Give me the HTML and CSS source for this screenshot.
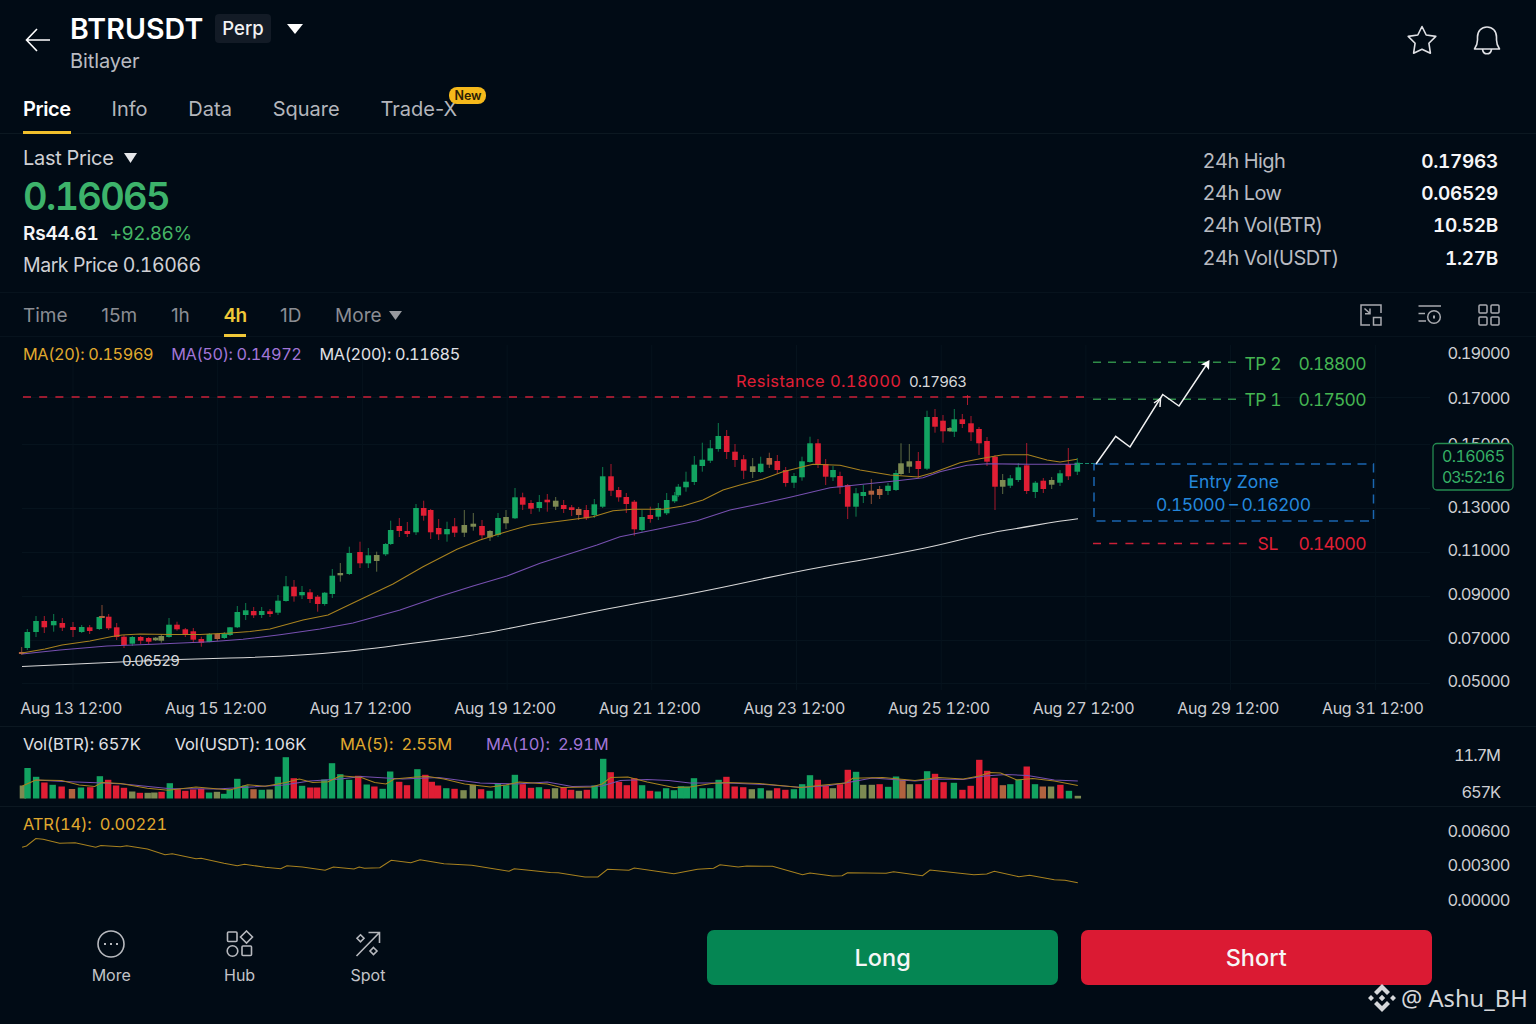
FILE: index.html
```html
<!DOCTYPE html>
<html lang="en">
<head>
  <meta charset="utf-8">
  <title>BTRUSDT Perp</title>
  <link rel="stylesheet" href="styles.css">
</head>
<body>
  <header class="topbar">
    <svg class="back" width="26" height="24" viewBox="0 0 26 24"><path d="M12 1 L1.5 12 L12 23 M1.5 12 H25"/></svg>
    <div class="pair">
      <div class="pair-row">
        <h1>BTRUSDT</h1>
        <span class="perp">Perp</span>
        <svg width="16" height="10" viewBox="0 0 16 10"><path d="M0 0 H16 L8 10 Z" fill="#fff"/></svg>
      </div>
      <div class="pair-name">Bitlayer</div>
    </div>
    <div class="top-icons">
      <svg width="30" height="30" viewBox="0 0 30 30"><path d="M15 1.5 L19.2 10 L28.8 11.4 L21.9 18.2 L23.4 28.2 L15 24.2 L6.6 28.2 L8.1 18.2 L1.2 11.4 L10.8 10 Z"/></svg>
      <svg width="28" height="30" viewBox="0 0 28 30"><path d="M1.5 24 C3.5 21 4.5 19 4.5 15 V12 C4.500 6 8.500 2 14 2 C19.500 2 23.500 6 23.500 12 V15 C23.500 19 24.500 21 26.500 24 Z M9.500 24.500 C10 27.500 12 28.800 14 28.800 C16 28.800 18 27.500 18.500 24.500"/></svg>
    </div>
  </header>

  <nav class="tabs">
    <a class="tab active">Price</a>
    <a class="tab">Info</a>
    <a class="tab">Data</a>
    <a class="tab">Square</a>
    <a class="tab">Trade-X<span class="badge">New</span></a>
  </nav>

  <section class="summary">
    <div class="last">
      <div class="last-label">Last Price <svg width="13" height="10" viewBox="0 0 13 10"><path d="M0 0 H13 L6.500 10 Z" fill="#e6e7ea"/></svg></div>
      <div class="last-price">0.16065</div>
      <div class="last-change"><b>Rs44.61</b><span>+92.86%</span></div>
      <div class="mark">Mark Price 0.16066</div>
    </div>
    <dl class="stats">
      <dt>24h High</dt><dd>0.17963</dd>
      <dt>24h Low</dt><dd>0.06529</dd>
      <dt>24h Vol(BTR)</dt><dd>10.52B</dd>
      <dt>24h Vol(USDT)</dt><dd>1.27B</dd>
    </dl>
  </section>

  <nav class="frames">
    <a>Time</a>
    <a>15m</a>
    <a>1h</a>
    <a class="active">4h</a>
    <a>1D</a>
    <a>More <svg width="13" height="9" viewBox="0 0 13 9"><path d="M0 0 H13 L6.500 9 Z" fill="#97999e"/></svg></a>
    <div class="tools">
      <svg width="22" height="22" viewBox="0 0 22 22"><path d="M10 21 H1 V1 H21 V9 M13.500 13.500 H21 V21 H13.500 Z M4.500 4.500 L10 9.500 M10 4.500 V9.700 H5"/></svg>
      <svg width="24" height="22" viewBox="0 0 24 22"><path d="M0.500 2 H23 M0.500 9.500 H7 M0.500 17 H8"/><circle cx="16" cy="13" r="6.300"/><path d="M16 11.500 V14.500" stroke-width="2"/></svg>
      <svg width="22" height="22" viewBox="0 0 22 22"><rect x="1" y="1" width="8" height="8" rx="1"/><rect x="13" y="1" width="8" height="8" rx="1"/><rect x="1" y="13" width="8" height="8" rx="1"/><rect x="13" y="13" width="8" height="8" rx="1"/></svg>
    </div>
  </nav>

  <section class="panel price-panel">
    <div class="legend">
      <span class="c-yellow">MA(20): 0.15969</span>
      <span class="c-purple">MA(50): 0.14972</span>
      <span>MA(200): 0.11685</span>
    </div>
    <svg id="price-chart" width="1536" height="389" viewBox="0 337 1536 389">
      <g id="grid" class="grid"></g>
      <line class="dash-red" x1="23" y1="397" x2="1084" y2="397"/>
      <path class="line-white" d="M22 666.500 C55 665 87 663.500 120 662 S190 659 230 658 S320 654 350 651 S430 641 460 637 S525 625 540 622.300 S620 606 650 601 S720 588 750 581.500 S820 567 850 562 S900 553 925 548 S980 534 1007 530 S1050 522 1078 518.700"/>
      <g id="candles"></g>
      <path id="ma50" class="line-purple"/>
      <path id="ma20" class="line-yellow"/>
      <text x="736" y="387" class="c-red" textLength="165">Resistance 0.18000</text>
      <text x="909" y="387" class="small" textLength="58">0.17963</text>
      <text x="122" y="666" class="small" textLength="58">0.06529</text>
      <path class="price-dash" d="M1079 463.500 H1096"/>

      <!-- targets -->
      <line class="dash-green" x1="1093" y1="362.300" x2="1236" y2="362.300"/>
      <line class="dash-green" x1="1093" y1="399.300" x2="1236" y2="399.300"/>
      <g class="level c-green">
        <text x="1244.500" y="370" textLength="37">TP 2</text><text x="1298.500" y="370" textLength="68">0.18800</text>
        <text x="1244.500" y="405.700" textLength="37">TP 1</text><text x="1298.500" y="405.700" textLength="68">0.17500</text>
      </g>
      <rect class="entry" x="1094" y="464" width="279.500" height="57"/>
      <g class="level c-blue">
        <text x="1188.500" y="488.300" textLength="90.500">Entry Zone</text>
        <text x="1156" y="511.300" textLength="155">0.15000 – 0.16200</text>
      </g>
      <line class="dash-red thin" x1="1093" y1="543.500" x2="1247" y2="543.500"/>
      <g class="level c-red">
        <text x="1257.500" y="550" textLength="21">SL</text><text x="1298.500" y="550" textLength="68">0.14000</text>
      </g>

      <!-- projected move -->
      <path class="projection" d="M1096 464 L1115.700 436.300 L1130 447 L1162.700 394.500 L1179 406 L1208 362.500"/>
      <path class="projection" d="M1154 403 L1160.500 398.500 L1160 407"/>
      <path d="M1209.500 360 L1201 364.500 L1205.500 365.500 L1209 370 Z" fill="#fff"/>

      <g id="price-axis" class="axis"></g>
      <rect class="tag" x="1433" y="443.500" width="80" height="46.500" rx="4"/>
      <g class="tag-text c-mint">
        <text x="1442" y="462.300" textLength="63">0.16065</text>
        <text x="1442" y="482.600" textLength="63">03:52:16</text>
      </g>
      <g id="time-axis" class="axis time"></g>
    </svg>
  </section>

  <section class="panel volume-panel">
    <div class="legend wide">
      <span>Vol(BTR): 657K</span>
      <span>Vol(USDT): 106K</span>
      <span class="c-yellow">MA(5):&nbsp; 2.55M</span>
      <span class="c-purple">MA(10):&nbsp; 2.91M</span>
    </div>
    <svg width="1536" height="80" viewBox="0 727 1536 80">
      <g id="volume"></g>
      <path id="vol-ma10" class="line-purple"/>
      <path id="vol-ma5" class="line-yellow"/>
      <g class="axis">
        <text x="1454" y="760.500" textLength="47">11.7M</text>
        <text x="1461.500" y="798" textLength="39.500">657K</text>
      </g>
    </svg>
  </section>

  <section class="panel atr-panel">
    <div class="legend"><span class="c-yellow">ATR(14):&nbsp; 0.00221</span></div>
    <svg width="1536" height="106" viewBox="0 807 1536 106">
      <path id="atr" class="line-yellow"/>
      <g class="axis">
        <text x="1447.500" y="837.300" textLength="63">0.00600</text>
        <text x="1447.500" y="871.300" textLength="63">0.00300</text>
        <text x="1447.500" y="906" textLength="63">0.00000</text>
      </g>
    </svg>
  </section>

  <footer class="bottom">
    <a class="nav-item">
      <svg width="28" height="28" viewBox="0 0 28 28"><circle cx="14" cy="14" r="13"/><path d="M7 14h2M13 14h2M19 14h2" stroke-width="2"/></svg>
      More
    </a>
    <a class="nav-item">
      <svg width="28" height="28" viewBox="0 0 28 28"><rect x="1.500" y="2" width="9.500" height="9.500" rx="1"/><path d="M20.500 1 L26.500 7 L20.500 13 L14.500 7 Z"/><circle cx="6.500" cy="21" r="5.300"/><rect x="16" y="16" width="9.500" height="9.500" rx="1"/></svg>
      Hub
    </a>
    <a class="nav-item">
      <svg width="28" height="28" viewBox="0 0 28 28"><path d="M2.500 26 L25 3 M14.500 2.500 H25.500 V13 M6.500 4.800 L10 8.300 L6.500 11.800 L3 8.300 Z M19.500 17.500 L23 21 L19.500 24.500 L16 21 Z"/></svg>
      Spot
    </a>
    <button class="btn long">Long</button>
    <button class="btn short">Short</button>
  </footer>

  <div class="watermark">
    <svg width="28" height="28" viewBox="0 0 28 28"><path d="M14 0 L22 8 L19 11 L14 6 L9 11 L6 8 Z M14 28 L22 20 L19 17 L14 22 L9 17 L6 20 Z M14 10.800 L17.200 14 L14 17.200 L10.800 14 Z M3 11 L6 14 L3 17 L0 14 Z M25 11 L28 14 L25 17 L22 14 Z"/></svg>
    <span>@ Ashu_BH</span>
  </div>
  <script src="script.js"></script>
</body>
</html>
```
FILE: styles.css
```css
* {
  box-sizing: border-box;
}
body {
  margin: 0;
  width: 1536px;
  height: 1024px;
  overflow: hidden;
  position: relative;
  background: #010b15;
  color: #e0e1e5;
  font-family: Inter, "Liberation Sans", sans-serif;
  font-size: 20px;
  font-variant-numeric: tabular-nums;
}
svg {
  display: block;
  flex: none;
}

/* header */
.topbar {
  display: flex;
  height: 84px;
  padding: 13px 35px 0 25px;
}
.back {
  margin: 15px 19px 0 0;
  fill: none;
  stroke: #fff;
  stroke-width: 1.6;
}
.pair-row {
  display: flex;
  align-items: center;
  height: 31px;
}
.pair h1 {
  margin: 0;
  font-size: 28.5px;
  font-weight: 600;
  color: #fff;
  letter-spacing: 0.1px;
}
.perp {
  margin: 0 16px 0 12px;
  padding: 0 7px;
  height: 29px;
  line-height: 29px;
  border-radius: 4px;
  background: #131b26;
  color: #f2f2f4;
  font-size: 18.500px;
  font-weight: 500;
}
.pair-name {
  line-height: 34px;
  color: #b9bbc1;
  letter-spacing: -0.1px;
}
.top-icons {
  display: flex;
  gap: 36px;
  margin: 12px 0 0 auto;
}
.top-icons svg {
  fill: none;
  stroke: #e0e1e5;
  stroke-width: 1.6;
  stroke-linejoin: round;
}

/* tabs */
.tabs {
  display: flex;
  gap: 40.8px;
  height: 50px;
  padding-left: 23px;
  border-bottom: 1px solid #0c1821;
  font-variant-numeric: normal;
}
.tab {
  position: relative;
  height: 50px;
  line-height: 50px;
  color: #b4b6bc;
}
.tab.active {
  color: #fff;
  font-weight: 600;
  letter-spacing: -0.4px;
  border-bottom: 3px solid #f0bf2c;
}
.badge {
  position: absolute;
  left: 69px;
  top: 3px;
  width: 37px;
  height: 17px;
  line-height: 17px;
  border-radius: 8px;
  background: #f5b91b;
  color: #2a2005;
  font-size: 12.5px;
  font-weight: 600;
  text-align: center;
}

/* price summary */
.summary {
  display: flex;
  justify-content: space-between;
  height: 158px;
  padding: 9px 38px 0 23px;
}
.last-label {
  display: flex;
  align-items: center;
  gap: 10px;
  height: 30px;
  color: #cfd0d4;
  letter-spacing: -0.3px;
}
.last-price {
  height: 46px;
  line-height: 46px;
  font-size: 38px;
  font-weight: 600;
  letter-spacing: -1.7px;
  color: #3db36b;
}
.last-change {
  display: flex;
  gap: 11px;
  height: 29px;
  line-height: 29px;
  font-size: 19px;
}
.last-change b {
  color: #f4f4f6;
  font-weight: 600;
  letter-spacing: -0.2px;
}
.last-change span {
  color: #45b565;
  letter-spacing: -0.5px;
}
.mark {
  line-height: 34px;
  color: #cfd0d4;
  font-size: 19.5px;
  letter-spacing: -0.45px;
}
.stats {
  display: grid;
  grid-template-columns: 1fr auto;
  grid-auto-rows: 32.2px;
  width: 295.500px;
  margin: 3px 0 0;
  line-height: 31px;
}
.stats dt {
  color: #b9bbc1;
  letter-spacing: -0.5px;
}
.stats dd {
  margin: 0;
  text-align: right;
  color: #f6f6f8;
  font-size: 19px;
  font-weight: 600;
  letter-spacing: -0.3px;
}

/* timeframes */
.frames {
  display: flex;
  gap: 33.7px;
  height: 45px;
  padding: 0 36px 0 23px;
  border-top: 1px solid #07131d;
  border-bottom: 1px solid #07131d;
  font-size: 19px;
  font-variant-numeric: normal;
  color: #8b8d93;
}
.frames a {
  display: flex;
  align-items: center;
  gap: 7px;
  height: 44px;
}
.frames .active {
  color: #f0c838;
  font-weight: 600;
  letter-spacing: -0.8px;
  border-bottom: 3px solid #f0c838;
  padding-top: 3px;
}
.tools {
  display: flex;
  align-items: center;
  gap: 36px;
  margin-left: auto;
}
.tools svg {
  fill: none;
  stroke: #a9abb0;
  stroke-width: 1.5;
}

/* chart panels */
.panel {
  position: relative;
  border-bottom: 1px solid #0c1821;
}
.price-panel {
  height: 390px;
}
.volume-panel {
  height: 80px;
}
.atr-panel {
  height: 106px;
  border-bottom: 0;
}
.legend {
  position: absolute;
  left: 23px;
  top: 7px;
  display: flex;
  gap: 18px;
  font-size: 16.300px;
  line-height: 20px;
  letter-spacing: -0.4px;
  white-space: nowrap;
}
.legend.wide {
  gap: 34px;
  font-size: 16.500px;
  letter-spacing: -0.2px;
}
.atr-panel .legend {
  font-size: 16.500px;
  letter-spacing: -0.2px;
}
.c-yellow { color: #e0a92e; }
.c-purple { color: #a276d8; }
.c-red { fill: #e01f35; }
.c-green { fill: #45b552; }
.c-blue { fill: #2487dc; }
.c-mint { fill: #35b065; }

text {
  font-size: 16.5px;
}
text.small {
  font-size: 15px;
  fill: #d6d7da;
}
.level text {
  font-size: 17.5px;
}
.axis text {
  font-size: 16.5px;
  fill: #cdced2;
}
.axis.time text {
  font-size: 16px;
}
.tag-text text {
  font-size: 16px;
}
.grid line {
  stroke: #06131d;
}
.line-white,
.line-purple,
.line-yellow {
  fill: none;
  stroke-width: 1.1;
}
.line-white { stroke: #d8d8d8; }
.line-purple { stroke: #7750b0; }
.line-yellow { stroke: #a8821f; }
.dash-red {
  stroke: #cc2038;
  stroke-width: 1.5;
  stroke-dasharray: 8 8.2;
}
.dash-red.thin {
  stroke-width: 1.4;
  stroke-dasharray: 8 8.200;
}
.dash-green {
  stroke: #2f8c48;
  stroke-width: 1.4;
  stroke-dasharray: 8 7;
}
.price-dash {
  stroke: #168a6c;
  stroke-dasharray: 4 2;
}
.entry {
  fill: none;
  stroke: #1a66b0;
  stroke-width: 1.5;
  stroke-dasharray: 9 6.500;
}
.projection {
  fill: none;
  stroke: #f2f2f2;
  stroke-width: 1.5;
}
.tag {
  fill: #010b15;
  stroke: #248c50;
  stroke-width: 1.3;
}

/* bottom bar */
.bottom {
  display: flex;
  height: 111px;
  padding: 17.400px 0 0 47px;
}
.nav-item {
  display: flex;
  flex-direction: column;
  align-items: center;
  width: 128.400px;
  font-size: 16px;
  line-height: 20px;
  gap: 7px;
  color: #c3c4c8;
}
.nav-item svg {
  fill: none;
  stroke: #b7b9be;
  stroke-width: 1.6;
}
.btn {
  width: 351px;
  height: 55px;
  margin-right: 22.500px;
  padding: 0;
  border: 0;
  border-radius: 7px;
  color: #f6f6f6;
  font: 500 23.500px Inter, sans-serif;
}
.long {
  margin-left: 275px;
  background: #058653;
}
.short {
  background: #db1a33;
}

.watermark {
  position: absolute;
  left: 1368px;
  top: 983px;
  display: flex;
  align-items: center;
  gap: 5px;
  font-family: "Noto Sans", sans-serif;
  font-size: 23.700px;
  line-height: 30px;
  color: #d5d7da;
  white-space: nowrap;
}
.watermark svg {
  fill: #d5d7da;
}

/* candle and bar colours */
.g { fill: #12a361; stroke: #12a361; }
.r { fill: #e01e34; stroke: #e01e34; }
.y { fill: #7d8a52; stroke: #7d8a52; }
.o { fill: #b0623f; stroke: #b0623f; }
#volume rect {
  stroke: none;
}
#candles rect {
  stroke: none;
}
```
FILE: script.js
```js
// x, wick top, body top, body bottom, wick bottom, colour
var candles = [
  [21.7,647,652,654,655,'o'],[27.3,629,632,648,650,'g'],[36,616,621,632,637,'g'],[44.3,616,621,627.3,633,'r'],
  [53.7,614,621,625.3,631.7,'g'],[62.3,618,623,627.7,631,'r'],[73,622,627,630,637,'r'],[81.7,625,627,632,633,'g'],
  [89.7,625,627.3,631,634,'r'],[99.3,616,617,629,630,'g'],[102,605,616,618,618,'o'],[108.7,614,616.7,628.3,630,'r'],
  [116.7,623,627.3,637,640,'r'],[124,635,636.7,645,648,'r'],[132.3,636,637,643.7,646,'g'],[140.7,636,637,640.7,644,'r'],
  [148.7,637,638,641.7,644,'r'],[155.7,637,637.7,640.3,641,'y'],[161.3,634,636,640.7,642.7,'y'],[169,618,624.7,637,637.7,'g'],
  [177,621.7,624.7,629.3,630.7,'r'],[185.3,628,629.3,634.7,637,'r'],[193.3,628,631.3,639.7,642,'r'],[201.3,636.7,639,642.7,646.7,'r'],
  [209.3,633,634,642,642.3,'g'],[217.3,633,634,639,641,'o'],[224.3,632,633.7,638,639,'g'],[230,627,627.3,635,636,'g'],
  [237.3,606,612,627.3,628,'g'],[245.7,603,610.3,615,620,'g'],[253.7,607,611,615.3,618,'r'],[261.7,607,611,615,618,'g'],
  [270,609,611.3,614,617,'r'],[278,595,600.7,612.7,615,'g'],[286,576,586.3,601,601.7,'g'],[294,580,586.7,596.3,601.7,'r'],
  [302,586,592,595.3,599,'g'],[310,589,592.3,599,603,'r'],[317.7,595,596.7,604,611.7,'r'],[324.7,592,592.7,604,605.7,'g'],
  [332.3,569,575.7,594,598,'g'],[340.3,563,573,575.3,581.7,'y'],[349.3,546.7,553,574,575,'g'],[360,541.7,552,563.3,568,'r'],
  [368.3,548,555.3,563.3,568,'g'],[376.7,551.7,555,561,571.7,'y'],[385.7,543,544,554.3,556,'g'],[390.7,520.7,530,544,545,'g'],
  [399.3,518,526,531,537,'r'],[407.3,522,531,534,537,'r'],[416,504,508,532.3,535,'g'],[423.7,500.7,508,515.7,520.7,'r'],
  [430.7,509,510,532.3,539,'r'],[438.7,519,528,534.3,540,'r'],[447,521.7,529,534.3,541.7,'g'],[454.7,518,526.3,532.7,537,'r'],
  [464.3,510,525,532.7,537,'y'],[473.3,513,523.7,526.7,530.7,'y'],[482,520,526,535.3,539,'r'],[490,530,531,537.3,541,'y'],
  [498,513,518,535,537,'g'],[506,510,517,523.3,529,'y'],[515,488,497.3,518.3,519,'g'],[522.7,492.7,497.3,504.7,510,'r'],
  [531,500,503,508.7,514,'r'],[539.3,495,502,508,511.7,'g'],[547.3,494,499.7,502.3,511.7,'r'],[555.7,497,500.7,506.7,510,'y'],
  [563.7,500,505,509,513,'r'],[571.7,505,507.3,510,516,'r'],[578.7,507,509,515,520,'o'],[586.3,505,510,518.3,520,'r'],
  [594.3,499,504.3,515,518,'g'],[602.7,467,476.3,506.7,508,'g'],[611,464,476.3,490.7,496,'r'],[618.7,487,490,497.3,501.7,'r'],
  [626.3,493,497,504,513,'r'],[634.3,500,501.7,529.3,535.7,'r'],[642,510,517,530,531.7,'g'],[650.3,506.7,515,519,522.7,'r'],
  [658.3,503,508,516.7,520,'g'],[666.7,493,500,513.3,515,'g'],[674.7,492,495.3,501.3,503,'g'],[678.3,484,486.7,495.3,497,'g'],
  [686,471.7,481.7,487.3,491.7,'g'],[694.3,456,464.7,482,485,'g'],[702.3,442.7,459.7,466,471.7,'g'],[710.3,440,448.3,460.7,463,'g'],
  [718.3,423,436,449,451.7,'g'],[726.7,430,436,452,459,'r'],[735,444,451.7,460,467,'r'],[743.7,455,459.3,470.7,479,'r'],
  [752.7,458,466.3,472,478,'y'],[760.7,456.7,463.7,472,473,'g'],[769.3,452.7,458,464.7,468,'o'],[777.3,455,461,470,474,'r'],
  [785.7,467,470,483,486.7,'r'],[794,473,476,482.7,488,'g'],[802,456.7,461.3,477.3,480.7,'g'],[810,436.7,443.3,462,462.7,'g'],
  [818,439,443.3,465,468,'r'],[825.7,459,464,476.7,485,'r'],[833,466,470,477.3,481,'g'],[840,471.7,476,487.3,494,'r'],
  [847.7,484,485,506.7,519,'r'],[856,488,493.3,506.7,516.7,'g'],[863.3,485,492,496,503,'g'],[871.3,479,490.7,494.7,504,'o'],
  [879.7,486,489,495,499,'o'],[888,483,485.7,491,495,'g'],[896,470,473,490,491,'g'],[901,443.3,463.3,474,475,'y'],
  [909.3,444,461.3,466.7,473,'y'],[918.3,452,461,469,478,'r'],[927,410.7,417,468.7,470,'g'],[935,409,417,426.7,432.7,'r'],
  [943,415,420.7,431.3,442.7,'r'],[950,427,428,431.3,432,'y'],[954.3,409,419.3,431.7,437,'g'],[962.3,414,419.3,424,428,'r'],
  [967.5,395,396,396.5,405,'r'],[971,416,423.3,432.3,441,'r'],[979,427,429,443.3,455,'r'],[987,437,441,461.7,466,'r'],
  [995,455,456.7,486.7,510,'r'],[1002.7,474,480,486.7,494,'y'],[1010.3,475,478.3,485.7,488,'g'],[1018.3,463,467.3,480,482,'g'],
  [1026.7,443,465.3,491,494,'r'],[1035.3,481,482.7,492,498,'g'],[1043.3,478,480.7,489,493,'r'],[1051.7,477,480,484.7,489,'y'],
  [1060,470,473.3,482.7,486,'g'],[1068.3,448,464,476.3,480,'r'],[1077.3,458,462.7,471.7,475,'g']
];

// x, bar height, colour
var volume = [
  [22.5,13,'y'],[27,30.5,'g'],[35.3,21.7,'g'],[43.3,16,'r'],[51.3,13.7,'g'],[60,12,'r'],[70,9.5,'o'],[78.7,11,'g'],
  [87.7,11.3,'r'],[97,22.3,'g'],[105,18.7,'r'],[112.7,13,'r'],[120.3,10.7,'r'],[128.3,7,'y'],[135.7,5.7,'r'],[143.3,5.7,'y'],
  [149.7,6,'y'],[156.7,6.7,'r'],[164.7,15.3,'g'],[172.3,9.3,'r'],[179.7,7.7,'r'],[187.3,9,'r'],[195,9.7,'r'],[202.7,6,'g'],
  [210.3,6.7,'y'],[217.3,4.7,'g'],[222.7,9.3,'g'],[230,19.7,'g'],[237.7,13,'g'],[245.7,9.3,'o'],[253.7,8.7,'g'],[261.3,9,'y'],
  [269.3,21.7,'g'],[277,41.3,'g'],[284.7,20.3,'r'],[292.7,12.7,'g'],[300.7,11,'r'],[307.3,11,'r'],[314.3,19,'g'],[321.7,35.3,'g'],
  [329.7,24.3,'g'],[338.3,18.7,'g'],[347,22.7,'r'],[355.3,14,'g'],[362.7,12,'r'],[370.7,9.7,'g'],[378,27,'g'],[386.7,16.7,'r'],
  [394.3,13.3,'r'],[404.3,29.3,'g'],[412,23.7,'r'],[418.3,16.7,'r'],[424.3,13,'r'],[432.3,10.3,'g'],[440.3,9.7,'r'],[449,8.3,'y'],
  [458,13.7,'y'],[466,9.3,'r'],[474.3,7.7,'g'],[482.3,15.3,'g'],[490.3,13.3,'g'],[498.7,23.7,'g'],[506.3,14.3,'r'],[514.3,10.7,'r'],
  [522,11.3,'g'],[529.7,9.3,'r'],[554,10.3,'y'],[562,11,'r'],[569,8.7,'r'],[576.3,7.7,'y'],
  [583.7,8.7,'r'],[591,13,'g'],[599,39.7,'g'],[606,26.3,'r'],[613.7,16.7,'r'],[621,13.3,'r'],[628,20.3,'r'],[635.3,13.3,'g'],
  [642.7,7.7,'r'],[650,7,'g'],[657.7,10.3,'g'],[665,8.3,'g'],[671.5,12.3,'g'],[677,12,'g'],[683.7,20.3,'g'],[691.7,10.3,'g'],
  [699,10.3,'g'],[706.7,18.7,'g'],[714,21.7,'r'],[721.7,12,'r'],[729.7,11.3,'r'],[737.7,9.3,'y'],[746,10.3,'g'],[754,8,'y'],
  [761.3,10.3,'r'],[769,8.7,'r'],[777,9.3,'g'],[784.7,14.3,'g'],[792,23.3,'g'],[799.3,18.7,'r'],[806.7,12.7,'r'],[813.3,10.3,'y'],
  [820,14.3,'r'],[827.3,28.7,'r'],[835,26.7,'g'],[841.7,13.7,'y'],[849.7,13.7,'y'],[857,14.3,'r'],[865,11.7,'g'],[872.3,22,'g'],
  [878.3,18.7,'o'],[885.3,14.3,'y'],[893.3,14.3,'r'],[901.3,27.3,'g'],[908.7,24.7,'r'],[916.7,16.3,'r'],[926.3,15.7,'g'],[934.3,8.7,'r'],
  [942,12.7,'r'],[950,38.7,'r'],[957.3,27.7,'r'],[964.3,20.7,'r'],[972,13.3,'o'],[979,14.3,'g'],[986.7,19,'g'],[994.3,32,'r'],
  [1002,14.3,'g'],[1009.3,12,'o'],[1017,12,'y'],[1025.7,13.7,'r'],[1033.7,7.7,'g'],[1042,2.7,'y']
];

var ma20 = '22,653 45,649 62,645 90,641 112,636.5 122,635 140,634 170,634.5 200,634.5 230,633 250,631.5 270,629 303,620 328,615 353,603 393,584 423,566.7 457,549.3 480,540 503,532.7 530,525 563,520.7 593,516.7 613,510.7 633,509.3 663,509.3 683,506 703,500 723,490 740,485 763,479 783,471.7 800,467.5 813,464.3 840,465.3 860,470 890,475 918,477 933,472.7 960,462.7 980,458.7 1003,454.7 1028,454.7 1047,460 1060,462 1077,459.3';
var ma50 = '22,654 60,650 107,646 153,644.3 210,641.7 243,639.3 280,634.7 320,629 353,623 400,610 437,597.3 473,586 507,576 540,563.3 597,545 620,536.7 657,529.3 697,520.7 730,510 763,503.3 790,497.3 830,487.7 863,484.3 897,480.7 923,477.7 940,471.7 967,465.3 987,463.7 1030,464.3 1077,464.3';
var atr = '21.7,847.3 26,846 35,838.5 42,839.3 58,843.3 73,842.7 93,847.3 98,845.5 117,846.7 123,845.7 143,849 160,854.7 167,853.7 190,858.7 195,858.3 217,863.3 230,865.7 237,864.3 257,867.3 272,868.7 278,865.7 293,867 315,870.3 323,867 343,869 348,867 353,868.3 368,867.7 379,860.3 398,862.7 407,859.7 430,863.7 457,865.3 493,871.3 498,868.7 510,870 533,872.5 557,872.7 582,877 594,877 603,869.3 623,870.3 628,868 665,873.7 687,869.3 702,868.3 708,864.7 725,867 733,866 757,866.3 785,874.7 792,873 813,876 822,875.7 827,872.7 863,873.3 870,871.7 897,875.7 904,870 945,874.7 957,874 964,871.3 987,876.7 997,875.3 1020,879.7 1030,880.3 1042,882.7';
var volMa5 = '22,786 35,780 60,780.5 77,785 92,786.5 99,782.5 117,783.5 143,788.3 163,790.3 190,787 223,790 240,784.7 257,786.3 277,782.5 290,779 303,782.5 318,781.7 330,775.7 350,777.5 363,782.5 374,784 382,779 403,777 415,776.5 430,779 450,784 475,787 490,785 503,782 530,784 560,787.5 588,787 598,784 606,777.5 622,777 640,782 665,787.5 680,787 700,783.5 715,782.5 745,783.5 783,787.5 805,785 825,783 832,778.3 860,777.5 890,780.5 912,777.5 935,779 950,776 960,772.5 970,773 985,780 1000,778.5 1020,781 1042,785.5';
var volMa10 = '35,780 62,781.5 100,783 120,784 163,788.5 210,789 243,787 275,785 300,781 330,779 350,776.5 390,779 425,777.5 465,783 500,784 530,782 570,786.5 598,786 615,780.5 640,779.5 660,780.5 680,783 715,783 750,784.5 785,787.5 810,785.5 830,782 850,778 890,781 910,779 935,779.5 955,776 975,774.5 995,775.5 1020,780 1042,781';

var NS = 'http://www.w3.org/2000/svg';

function add(parent, tag, attrs, label) {
  var el = document.createElementNS(NS, tag);
  for (var k in attrs) el.setAttribute(k, attrs[k]);
  if (label) el.textContent = label;
  document.getElementById(parent).appendChild(el);
}

// volume and ATR samples sit closer together, spread them to the candle time scale
function timeX(x) {
  if (x < 534) return 10 + (x - 10) * 1.0331;
  return 540 + (x - 540) * 1.0714;
}

function setLine(id, points, spread) {
  var pts = points.split(' ').map(function (p) {
    var xy = p.split(',').map(Number);
    return (spread ? timeX(xy[0]).toFixed(1) : xy[0]) + ' ' + xy[1];
  });
  document.getElementById(id).setAttribute('d', 'M' + pts.join(' L'));
}

candles.forEach(function (c) {
  add('candles', 'line', { x1: c[0], x2: c[0], y1: c[1], y2: c[4], 'class': c[5], opacity: 0.75 });
  add('candles', 'rect', { x: c[0] - 2.8, y: c[2], width: 5.6, height: c[3] - c[2], 'class': c[5] });
});

volume.forEach(function (v) {
  add('volume', 'rect', { x: timeX(v[0]) - 3.2, y: 798.5 - v[1], width: 6.4, height: v[1], 'class': v[2] });
});

setLine('ma20', ma20);
setLine('ma50', ma50);
setLine('atr', atr, true);
setLine('vol-ma5', volMa5, true);
setLine('vol-ma10', volMa10, true);

// grid and axes
[397, 444, 508, 552, 596, 640, 683].forEach(function (y) {
  add('grid', 'line', { x1: 22, x2: 1430, y1: y + 0.5, y2: y + 0.5 });
});
for (var i = 0; i < 10; i++) {
  var gx = 73 + i * 144.7;
  add('grid', 'line', { x1: gx, x2: gx, y1: 345, y2: 690 });
}

[['0.19000', 359], ['0.17000', 403.5], ['0.15000', 449.5], ['0.13000', 513.3], ['0.11000', 556],
 ['0.09000', 599.7], ['0.07000', 644], ['0.05000', 687]].forEach(function (p) {
  add('price-axis', 'text', { x: 1447.5, y: p[1], textLength: 63 }, p[0]);
});

for (var d = 0; d < 10; d++) {
  add('time-axis', 'text', { x: 20.3 + d * 144.63, y: 713.5, textLength: 102 }, 'Aug ' + (13 + d * 2) + ' 12:00');
}
```
